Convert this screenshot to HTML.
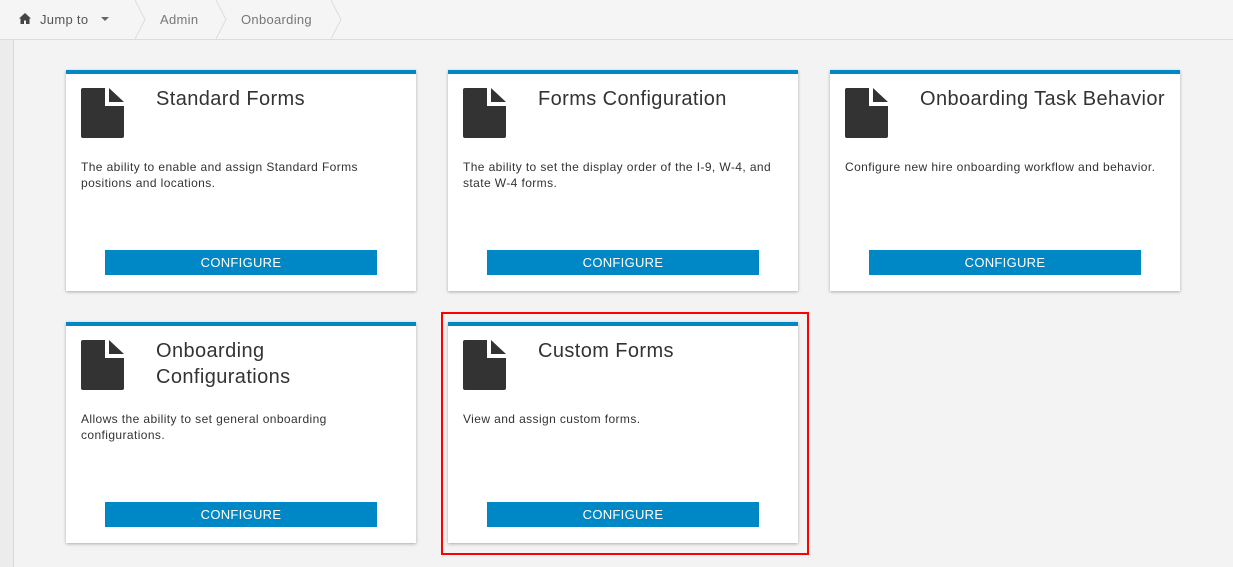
<!DOCTYPE html>
<html><head><style>
*{margin:0;padding:0;box-sizing:border-box}
body{width:1233px;height:567px;background:#f3f3f3;font-family:"Liberation Sans",sans-serif;position:relative;overflow:hidden;color:#333}
.hdr{position:absolute;left:0;top:0;width:1233px;height:40px;background:#f5f5f5;border-bottom:1px solid #dcdcdc}
.crumb{position:absolute;top:12px;font-size:13px;color:#777;letter-spacing:0.3px}
.sep{position:absolute;top:0;height:39px;width:14px}
.side{position:absolute;left:0;top:40px;width:14px;height:527px;background:#ececec;border-right:1px solid #d8d8d8}
.card{position:absolute;width:350px;height:221px;background:#fff;border-top:4px solid #0088c6;box-shadow:0 1px 3px rgba(0,0,0,.3)}
.card svg{position:absolute;left:15px;top:14px}
.card h2{position:absolute;left:90px;top:12px;font-size:20px;font-weight:normal;color:#333;line-height:26px;width:255px;letter-spacing:0.4px}
.card p{position:absolute;left:15px;top:85px;font-size:12px;line-height:16px;color:#333;width:330px;letter-spacing:0.4px}
.btn{position:absolute;left:39px;top:176px;width:272px;height:25px;background:#0088c6;color:#fff;font-size:13px;text-align:center;line-height:25px;letter-spacing:0.3px}
.red{position:absolute;left:441px;top:312px;width:368px;height:243px;border:2px solid #f00}
</style></head><body>
<div class="hdr">
<svg style="position:absolute;left:19px;top:13px" width="12" height="11" viewBox="0 0 12 11"><path d="M6 0L0 5.5h1.5V11h3.5V7.5h2V11h3.5V5.5H12z" fill="#444"/></svg>
<span class="crumb" style="left:40px;color:#555">Jump to</span>
<svg style="position:absolute;left:101px;top:17px" width="8" height="5"><path d="M0 0h8L4 4z" fill="#666"/></svg>
<svg class="sep" style="left:135px" viewBox="0 0 14 39"><path d="M0 0L10 19.5L0 39" stroke="#ddd" fill="none"/></svg>
<span class="crumb" style="left:160px">Admin</span>
<svg class="sep" style="left:216px" viewBox="0 0 14 39"><path d="M0 0L10 19.5L0 39" stroke="#ddd" fill="none"/></svg>
<span class="crumb" style="left:241px">Onboarding</span>
<svg class="sep" style="left:331px" viewBox="0 0 14 39"><path d="M0 0L10 19.5L0 39" stroke="#ddd" fill="none"/></svg>
</div>
<div class="side"></div>

<div class="card" style="left:66px;top:70px"><svg width="43" height="50" viewBox="0 0 43 50"><path d="M2 0h22v18h19v30a2 2 0 0 1-2 2H2a2 2 0 0 1-2-2V2a2 2 0 0 1 2-2z M28 0l15 14H28z" fill="#333"/></svg><h2>Standard Forms</h2><p>The ability to enable and assign Standard Forms<br>positions and locations.</p><div class="btn">CONFIGURE</div></div>
<div class="card" style="left:448px;top:70px"><svg width="43" height="50" viewBox="0 0 43 50"><path d="M2 0h22v18h19v30a2 2 0 0 1-2 2H2a2 2 0 0 1-2-2V2a2 2 0 0 1 2-2z M28 0l15 14H28z" fill="#333"/></svg><h2>Forms Configuration</h2><p>The ability to set the display order of the I-9, W-4, and<br>state W-4 forms.</p><div class="btn">CONFIGURE</div></div>
<div class="card" style="left:830px;top:70px"><svg width="43" height="50" viewBox="0 0 43 50"><path d="M2 0h22v18h19v30a2 2 0 0 1-2 2H2a2 2 0 0 1-2-2V2a2 2 0 0 1 2-2z M28 0l15 14H28z" fill="#333"/></svg><h2>Onboarding Task Behavior</h2><p>Configure new hire onboarding workflow and behavior.</p><div class="btn">CONFIGURE</div></div>
<div class="card" style="left:66px;top:322px"><svg width="43" height="50" viewBox="0 0 43 50"><path d="M2 0h22v18h19v30a2 2 0 0 1-2 2H2a2 2 0 0 1-2-2V2a2 2 0 0 1 2-2z M28 0l15 14H28z" fill="#333"/></svg><h2>Onboarding<br>Configurations</h2><p>Allows the ability to set general onboarding<br>configurations.</p><div class="btn">CONFIGURE</div></div>
<div class="card" style="left:448px;top:322px"><svg width="43" height="50" viewBox="0 0 43 50"><path d="M2 0h22v18h19v30a2 2 0 0 1-2 2H2a2 2 0 0 1-2-2V2a2 2 0 0 1 2-2z M28 0l15 14H28z" fill="#333"/></svg><h2>Custom Forms</h2><p>View and assign custom forms.</p><div class="btn">CONFIGURE</div></div>
<div class="red"></div>
</body></html>
